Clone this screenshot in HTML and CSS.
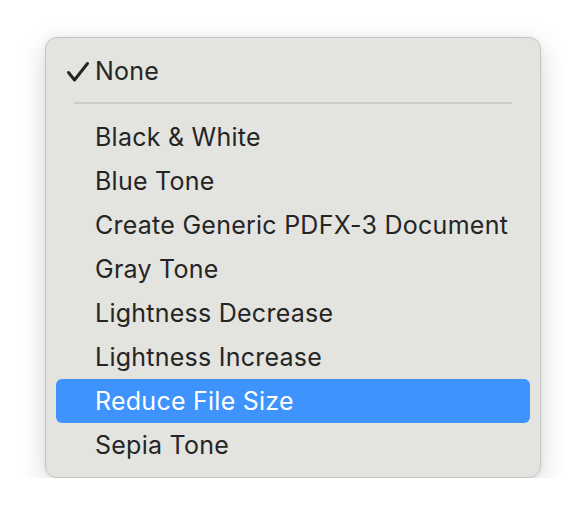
FILE: index.html
```html
<!DOCTYPE html>
<html>
<head>
<meta charset="utf-8">
<link rel="stylesheet" href="styles.css">
</head>
<body>
<div class="menu">
  <div class="item checked"><svg class="check" width="24" height="22" viewBox="0 0 24 22"><path d="M2.5 11.5 L8.5 19 L21.5 2.5" fill="none" stroke="#252525" stroke-width="3" stroke-linecap="round" stroke-linejoin="round"/></svg>None</div>
  <div class="sep"></div>
  <div class="item">Black &amp; White</div>
  <div class="item">Blue Tone</div>
  <div class="item">Create Generic PDFX-3 Document</div>
  <div class="item">Gray Tone</div>
  <div class="item">Lightness Decrease</div>
  <div class="item">Lightness Increase</div>
  <div class="item active">Reduce File Size</div>
  <div class="item">Sepia Tone</div>
</div>
</body>
</html>
```
FILE: styles.css
```css
html, body {
  margin: 0;
  padding: 0;
  background: #ffffff;
}
body {
  padding: 37px 0 0 45px;
  font-family: Inter, "Liberation Sans", sans-serif;
}
.menu {
  box-sizing: content-box;
  width: 474px;
  background: #e3e3df;
  border: 1px solid #c4c4c2;
  border-radius: 12px;
  padding: 11px 10px 10px 10px;
  box-shadow: 0 8px 28px rgba(0,0,0,0.16), 0 0 6px rgba(0,0,0,0.05);
}
.item {
  position: relative;
  height: 44px;
  line-height: 44px;
  padding-left: 39px;
  font-size: 25px;
  letter-spacing: 0.25px;
  color: #252525;
  border-radius: 6px;
  white-space: nowrap;
}
.check {
  position: absolute;
  left: 10px;
  top: 12px;
}
.sep {
  height: 2px;
  background: #cbcbc8;
  margin: 9px 18px 11px 18px;
}
.active {
  background: #3e93fc;
  color: #ffffff;
}
```
